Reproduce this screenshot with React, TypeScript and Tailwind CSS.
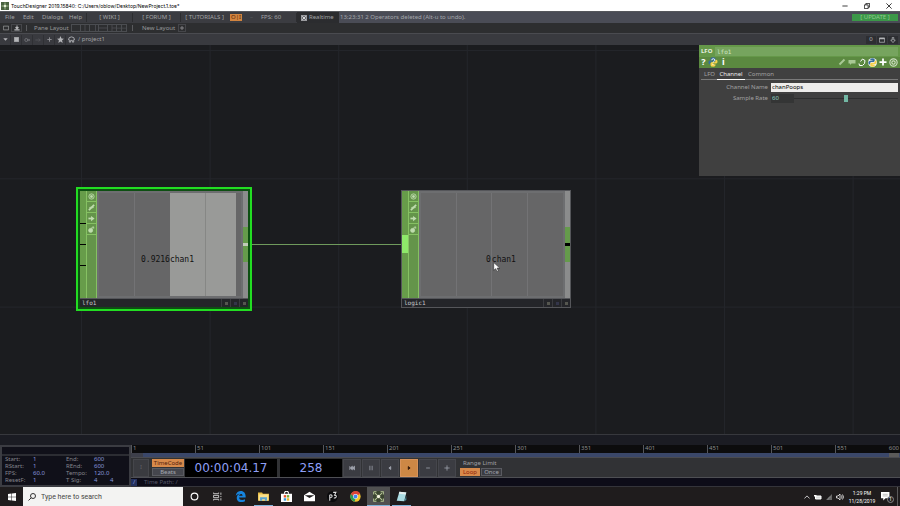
import React from 'react';
import { clsx } from 'clsx';

const TICKS = [1, 51, 101, 151, 201, 251, 301, 351, 401, 451, 501, 551];

const TIME_INFO = [
  ['Start:', '1', 'End:', '600', ''],
  ['RStart:', '1', 'REnd:', '600', ''],
  ['FPS:', '60.0', 'Tempo:', '120.0', ''],
  ['ResetF:', '1', 'T Sig:', '4', '4'],
];

function Icon({ children, className = 'size-2', box = '0 0 16 16' }: { children: React.ReactNode; className?: string; box?: string }) {
  return (
    <svg viewBox={box} className={clsx('shrink-0', className)} fill="none" stroke="currentColor" strokeWidth="2" aria-hidden="true">
      {children}
    </svg>
  );
}

function TitleBar() {
  return (
    <header className="flex h-[11px] shrink-0 items-center bg-white pl-px text-black">
      <Icon className="size-2">
        <rect width="16" height="16" fill="#4a6340" stroke="none" />
        <path d="M8 1v14M1 8h14" stroke="#9db98a" />
        <circle cx="8" cy="8" r="2.5" fill="#e4efd8" stroke="none" />
      </Icon>
      <h1 className="ml-0.5 flex-1 whitespace-nowrap font-['Inter',sans-serif] text-[5px] leading-[8px]">
        TouchDesigner 2019.15840: C:/Users/oblow/Desktop/NewProject.1.toe*
      </h1>
      <div className="flex w-[66px] justify-around">
        <button aria-label="Minimize"><Icon className="size-[6px]"><path d="M1 8h14" /></Icon></button>
        <button aria-label="Restore">
          <Icon className="size-[6px]"><path d="M1 5h10v10H1zM5 5V1h10v10h-4" /></Icon>
        </button>
        <button aria-label="Close"><Icon className="size-[6px]"><path d="M1 1l14 14M15 1L1 15" /></Icon></button>
      </div>
    </header>
  );
}

function MenuBar() {
  return (
    <nav className="flex h-3 shrink-0 items-center border-t border-[#55575c] bg-[#3b3c41] text-[#a3a4a6]">
      <button className="w-[23px] pl-[5px] text-left">File</button>
      <button className="w-[19px] text-left">Edit</button>
      <button className="w-[27px] text-left">Dialogs</button>
      <button className="w-[17px] text-left">Help</button>
      <a href="#wiki" className="w-[46px] border-l border-[#2c2d30] text-center">[ WIKI ]</a>
      <a href="#forum" className="w-[48px] border-l border-[#2c2d30] text-center">[ FORUM ]</a>
      <a href="#tutorials" className="w-[48px] border-l border-[#2c2d30] text-center">[ TUTORIALS ]</a>
      <button className="ml-0.5 h-[7px] w-[12px] bg-[#d1843f] leading-[7px] text-[#5a2508]">O|I</button>
      <span className="w-[19px] text-center text-[#5d5f63]">–</span>
      <span className="w-[36px] border-r border-[#2c2d30]">FPS: 60</span>
      <label className="flex h-full w-[42px] items-center gap-0.5 bg-[#2b2c2f] pl-1">
        <span className="grid size-[6px] place-items-center">
          <input
            type="checkbox"
            defaultChecked
            className="col-start-1 row-start-1 size-[6px] appearance-none border border-[#9a9b9f] bg-[#6a6b70]"
          />
          <Icon className="pointer-events-none col-start-1 row-start-1 size-1 text-[#d5d6d8]"><path d="M1 1l14 14M15 1L1 15" strokeWidth="4" /></Icon>
        </span>
        Realtime
      </label>
      <p className="h-full flex-1 bg-[#4a4c56] pl-px leading-[11px] text-[#a5a7ac]">
        13:23:31 2 Operators deleted (Alt-u to undo).
      </p>
      <div className="flex h-full items-center bg-[#4a4c56] pr-0.5">
        <button className="h-[7px] w-[46px] bg-[#3b9848] leading-[7px] text-[#8fca8f]">[ UPDATE ]</button>
      </div>
    </nav>
  );
}

const LAYOUTS = ['', 'M8 0v16', 'M11 0v16', 'M0 8h16', 'M8 0v16M8 8h8', 'M8 0v16M0 8h16'];

function PaneBar() {
  return (
    <div className="flex h-2.5 shrink-0 items-center bg-[#2d2e30] text-[#98999b]">
      <button aria-label="Open pane" className="flex h-2 w-[11px] items-center justify-center">
        <Icon className="size-[6px]"><path d="M1 3h14v10H1z" /></Icon>
      </button>
      <button aria-label="Save pane" className="flex h-2 w-[11px] items-center justify-center border border-[#45464a] text-[#b7b8ba]">
        <Icon className="size-[6px]"><path d="M8 1v8M4 6l4 4 4-4M1 13h14" strokeWidth="3" /></Icon>
      </button>
      <span className="ml-1 h-1.5 border-l border-[#5a5b5e]" />
      <span className="w-[44px] pl-[7px]">Pane Layout</span>
      <div className="flex border border-[#4b4d51]">
        {LAYOUTS.map((d, i) => (
          <button key={i} aria-label={`Layout ${i + 1}`} className="h-1.5 w-[9px] border-r border-[#4b4d51] last:border-r-0">
            <svg viewBox="0 0 16 16" preserveAspectRatio="none" className="size-full" stroke="#4b4d51" strokeWidth="2">
              <path d={d} />
            </svg>
          </button>
        ))}
      </div>
      <span className="ml-[5px] h-1.5 border-l border-[#5a5b5e]" />
      <span className="w-[45px] pl-[9px]">New Layout</span>
      <button aria-label="Add layout" className="flex size-2 items-center justify-center border border-[#45464a]">
        <Icon className="size-1"><path d="M8 0v16M0 8h16" strokeWidth="3" /></Icon>
      </button>
    </div>
  );
}

function PathBar() {
  const cell = 'flex h-2.5 w-[11px] items-center justify-center border-r border-[#2f3034]';
  return (
    <div className="flex h-3 shrink-0 items-center border-t border-[#4a4b50] bg-[#393a3f] text-[#b4b5b8]">
      <button aria-label="Pane type" className={cell}><Icon className="size-[5px]"><path d="M1 4h14l-7 8z" fill="currentColor" stroke="none" /></Icon></button>
      <button aria-label="Stop" className={cell}><Icon className="size-[5px]"><path d="M1 1h14v14H1z" fill="currentColor" /></Icon></button>
      <button aria-label="Back" className={clsx(cell, 'text-[#7b7c80]')}><Icon className="size-[6px]"><circle cx="6" cy="8" r="4" /><path d="M8 8h7M12 5l3 3-3 3" /></Icon></button>
      <button aria-label="Forward" className={clsx(cell, 'text-[#595a5f]')}><Icon className="size-[6px]"><path d="M1 8h13M10 4l4 4-4 4" /></Icon></button>
      <button aria-label="Add" className={clsx(cell, 'text-[#8f9094]')}><Icon className="size-[5px]"><path d="M8 1v14M1 8h14" strokeWidth="3" /></Icon></button>
      <button aria-label="Bookmarks" className={cell}><Icon className="size-[7px]"><path d="M8 0l2.3 5.6 5.7.4-4.4 3.7L13 16l-5-3.3L3 16l1.4-6.300L0 6l5.700-.4z" fill="currentColor" stroke="none" /></Icon></button>
      <button aria-label="Home" className="flex h-2.5 w-[11px] items-center justify-center"><Icon className="size-[7px]"><path d="M1 9a7 7 0 0 1 14 0M3 8v6h3v-4h4v4h3V8" /></Icon></button>
      <span className="flex-1 pl-px text-[#a1a2a5]">/ project1</span>
      <button aria-label="Count" className="flex h-2 w-2.5 items-center justify-center bg-[#2d2e32] text-[#b4b5b8]">0</button>
      <button aria-label="Maximize" className="ml-px flex h-2 w-2.5 items-center justify-center bg-[#2d2e32]"><Icon className="size-[6px]"><path d="M1 3h14v11H1z" /><path d="M1 4h14" strokeWidth="4" /></Icon></button>
      <button aria-label="Split" className="ml-px mr-0.5 flex h-2 w-2.5 items-center justify-center bg-[#2d2e32]"><Icon className="size-[6px]"><path d="M6 1h4v7h4l-6 7-6-7h4z" /></Icon></button>
    </div>
  );
}

const FLAGS = [
  <g key="view"><circle cx="8" cy="8" r="6" /><circle cx="8" cy="8" r="2.500" fill="currentColor" /></g>,
  <g key="edit"><path d="M2 14L14 2" strokeWidth="4" /><path d="M3 8l5-1M8 9l5-1" /></g>,
  <g key="export"><path d="M1 8h8" strokeWidth="4" /><path d="M7 2l8 6-8 6z" fill="currentColor" stroke="none" /></g>,
  <g key="lock"><circle cx="6" cy="10" r="4.500" fill="currentColor" /><path d="M9 7V3l4-1v4" /></g>,
];

type NodeProps = { name: string; value: string; selected?: boolean };

function ChopNode({ name, value, selected }: NodeProps) {
  return (
    <section
      className={clsx(
        'flex flex-col',
        selected
          ? 'w-[176px] border-2 border-[#22dd22] p-0.5 bg-[#0d4f12]'
          : 'w-[170px] border border-[#55565a] bg-[#55565a]',
      )}
    >
      <div className="flex h-[107px]">
        <div className="flex w-[6px] flex-col bg-[#679c4a]">
          {selected ? (
            <>
              <i className="h-[33px] border-b border-black" />
              <i className="h-[21px] border-b border-black" />
              <i className="h-[21px] border-b border-black" />
            </>
          ) : (
            <i className="mt-[44px] h-[18px] bg-[#8ee86a]" />
          )}
        </div>
        <div className="w-[11px] border-x border-[#86c163] bg-[#64944a]">
          {FLAGS.map((flag, i) => (
            <button key={i} aria-label={`${name} flag ${i + 1}`} className="flex h-[11px] w-full items-center justify-center border-b border-[#86c163] text-[#bfdcae]">
              <Icon className="size-[7px]">{flag}</Icon>
            </button>
          ))}
        </div>
        <div className="relative grid flex-1 grid-cols-4 border-2 border-[#6d6e70] bg-[#666667]">
          <i className="border-r border-[#737375]" />
          <i className={clsx(!selected && 'border-r border-[#737375]')} />
          <i className={clsx('border-r', selected ? 'border-[#868785] bg-[#999a98]' : 'border-[#737375]')} />
          <i className={clsx(selected && 'border-r-[5px] border-[#666667] bg-[#999a98]')} />
          <output
            className={clsx(
              "absolute top-[62px] whitespace-pre font-['DejaVu_Sans_Mono',monospace] text-[8px] leading-[10px] text-[#111]",
              selected ? 'left-[42px]' : 'left-[65px]',
            )}
          >
            {value}
            <span className={clsx(!selected && 'ml-px')}>chan1</span>
          </output>
        </div>
        <div className="flex w-[5px] flex-col bg-[#8b8c8c] pt-[36px]">
          <i className="h-4 bg-[#659b4b]" />
          <i className={clsx('h-[3px]', selected ? 'bg-[#c1cbb9]' : 'bg-black')} />
          <i className="h-4 bg-[#659b4b]" />
        </div>
      </div>
      <div className="flex h-[9px] items-center border-t border-[#55565a] bg-[#242529] font-['DejaVu_Sans_Mono',monospace] text-[6px] leading-[8px] text-[#c7c8c9]">
        <span className="flex-1 pl-0.5">{name}</span>
        {['Bypass', 'Color', 'Display'].map((label) => (
          <button key={label} aria-label={label} className="flex h-full w-[9px] items-center justify-center border-l border-[#3a3b3f]">
            <i className={clsx('size-[3px]', label === 'Color' ? 'bg-[#33354a]' : 'bg-[#55564f]')} />
          </button>
        ))}
      </div>
    </section>
  );
}

function PythonIcon({ round }: { round?: boolean }) {
  return (
    <svg viewBox="0 0 16 16" className={round ? 'size-[9px]' : 'size-2.5'} aria-hidden="true">
      {round && <circle cx="8" cy="8" r="8" fill="#f1f3ef" />}
      <path d="M8 0.500c-4 0-4 1.500-4 4h4v1H3c-3 0-3 6 0 6h1V9c0-1 1-2 2-2h4c1 0 2-1 2-2 0-3 0-4.500-4-4.500z" fill="#376d9f" />
      <path d="M8 15.500c4 0 4-1.500 4-4H8v-1h5c3 0 3-6 0-6h-1v2c0 1-1 2-2 2H6c-1 0-2 1-2 2 0 3 0 5 4 5z" fill="#f5d14a" />
      {!round && <path d="M6 5c0-3 5-3 5 0 0 2-3 2-3 4M8 11v2" stroke="#fff" strokeWidth="1.500" fill="none" />}
    </svg>
  );
}

function ParameterPanel() {
  return (
    <aside className="absolute right-0 top-0 h-[131px] w-[201px] bg-[#404040] text-[#a2a2a2]">
      <div className="flex h-3 items-center bg-[#659849] pl-0.5 pr-0.5">
        <label htmlFor="op-name" className="w-[14px] font-bold text-[#e7efe0]">LFO</label>
        <input id="op-name" defaultValue="lfo1" className="h-[9px] w-0 flex-1 bg-[#76a45e] px-0.5 font-['DejaVu_Sans_Mono',monospace] text-[6px] text-[#d0e4c4]" />
      </div>
      <div className="flex h-[11px] items-center gap-0.5 bg-[#5b8940] pb-px pl-0.5 pr-0.5 text-white">
        <button aria-label="Help" className="w-[5px] text-[9px] font-bold leading-[10px]">?</button>
        <button aria-label="Python help"><PythonIcon /></button>
        <button aria-label="Info" className="flex-1 pl-0.5 text-left text-[9px] font-bold leading-[10px]">i</button>
        <button aria-label="Edit" className="text-[#a8c894]"><Icon><path d="M3 13L13 3" strokeWidth="4" /></Icon></button>
        <button aria-label="Comment" className="text-[#a8c894]"><Icon><path d="M1 4h14v7H7l-3 3v-3H1z" fill="currentColor" stroke="none" /></Icon></button>
        <button aria-label="Copy"><Icon><path d="M5 7l4-5 5 3-1 6-4 4H3l-1-4" /></Icon></button>
        <button aria-label="Language"><PythonIcon round /></button>
        <button aria-label="Add"><Icon><path d="M8 1v14M1 8h14" strokeWidth="3.500" /></Icon></button>
        <button aria-label="Customize" className="text-[#cfe0c3]"><Icon className="size-[9px]"><circle cx="8" cy="8" r="6.500" /><circle cx="8" cy="8" r="3" /></Icon></button>
      </div>
      <div role="tablist" className="mx-0.5 mt-0.5 flex h-[10px] border-b border-[#7a7a7a]">
        <button role="tab" className="w-4 pl-px leading-[9px]">LFO</button>
        <button role="tab" aria-selected="true" className="h-[10px] w-[28px] border-b border-white leading-[9px] text-[#ececec]">Channel</button>
        <button role="tab" className="w-[32px] leading-[9px]">Common</button>
      </div>
      <div className="flex items-center pr-0.5 pt-[3px]">
        <label htmlFor="channel-name" className="w-[72px] pr-[3px] text-right">Channel Name</label>
        <input id="channel-name" defaultValue="chanPoops" className="h-[9px] w-0 flex-1 bg-[#eeedeb] px-px text-[6px] text-black" />
      </div>
      <div className="flex items-center pr-0.5 pt-0.5">
        <label htmlFor="sample-rate" className="w-[72px] pr-[3px] text-right">Sample Rate</label>
        <input id="sample-rate" defaultValue="60" className="h-[9px] w-[23px] bg-[#343535] px-px text-[6px] text-[#8fd0c0]" />
        <input
          type="range"
          aria-label="Sample Rate"
          defaultValue="50"
          className="h-[9px] w-0 flex-1 appearance-none bg-[linear-gradient(#2e2f2f,#2e2f2f)] bg-[length:100%_1px] bg-center bg-no-repeat [&::-webkit-slider-thumb]:h-[7px] [&::-webkit-slider-thumb]:w-1 [&::-webkit-slider-thumb]:appearance-none [&::-webkit-slider-thumb]:bg-[#73b8a4]"
        />
      </div>
    </aside>
  );
}

function Network() {
  return (
    <main className="relative flex-1 overflow-hidden bg-[#1b1c1f]">
      <svg className="absolute inset-0 size-full" aria-hidden="true">
        <defs>
          <pattern id="grid" x="81" y="5" width="128.600" height="128.300" patternUnits="userSpaceOnUse">
            <path d="M0.500 0V129M0 0.500H129" stroke="#23252a" fill="none" />
          </pattern>
        </defs>
        <rect width="100%" height="100%" fill="url(#grid)" />
        <path d="M248 199.500H402" stroke="#6f9a5c" />
      </svg>
      <div className="absolute left-[76px] top-[142px]"><ChopNode name="lfo1" value="0.9216" selected /></div>
      <div className="absolute left-[401px] top-[145px]"><ChopNode name="logic1" value="0" /></div>
      <svg viewBox="0 0 12 18" className="absolute left-[493px] top-[217px] h-[10px] w-[7px]" aria-hidden="true">
        <path d="M1 1v14l3.500-3 2.500 5 2.500-1-2.500-5H12z" fill="#fff" stroke="#222" />
      </svg>
      <ParameterPanel />
    </main>
  );
}

const TRANSPORT = [
  { label: 'Jump to start', d: 'M2 3v10M9 3v10L3 8zM15 3v10L9 8z' },
  { label: 'Pause', d: 'M5 2v12M11 2v12' },
  { label: 'Reverse', d: 'M10 4v8L5 8z' },
  { label: 'Play', d: 'M6 4v8l5-4z', active: true },
  { label: 'Step back', d: 'M3 8h10' },
  { label: 'Step forward', d: 'M1 8h14M8 1v14' },
];

function Timeline() {
  return (
    <div className="flex h-[42px] shrink-0 bg-[#0d0c18]">
      <div className="w-[131px] border-2 border-[#3b3c42] bg-[#101019]">
        <div className="h-[9px] border-b-2 border-[#2c2d33]" />
        <table className="ml-[3px] text-left text-[#84858c]">
          <tbody>
            {TIME_INFO.map(([a, b, c, d, e]) => (
              <tr key={a} className="h-[7px] leading-[7px]">
                <th className="w-[28px] p-0 font-normal">{a}</th>
                <td className="w-[33px] p-0 text-[#8797dd]">{b}</td>
                <th className="w-[28px] p-0 font-normal">{c}</th>
                <td className="w-4 p-0 text-[#8797dd]">{d}</td>
                <td className="w-2 p-0 text-[#8797dd]">{e}</td>
              </tr>
            ))}
          </tbody>
        </table>
      </div>
      <div className="flex min-w-0 flex-1 flex-col">
        <div className="flex h-[8px] bg-[#0c0c0d] pr-px text-[#8b8c8e]">
          {TICKS.map((tick) => (
            <span key={tick} className="flex-1 border-l border-[#55565a] pl-px leading-[7px]">{tick}</span>
          ))}
          <span className="w-0"><span className="float-right leading-[7px]">600</span></span>
        </div>
        <div className="flex h-[5px] border-b border-[#4a4b50] bg-[#3a4769] pr-px">
          <i className="w-3 bg-[#3d3f4a]" />
          <i className="ml-auto w-2.5 bg-[#5b5a59]" />
        </div>
        <div className="flex h-5 items-center gap-px border-b border-[#4e4f54] bg-[#313235] pl-0.5">
          <button aria-label="Cue" className="mr-0.5 h-[18px] w-4 border border-[#45464b] bg-[#3a3b40] text-[#606167]">I</button>
          <div className="flex w-[32px] flex-col gap-px">
            <button className="h-2 bg-[#d78a4b] leading-2 text-[#54200b]">TimeCode</button>
            <button className="h-2 border border-[#5a5b61] bg-[#45464d] leading-[6px] text-[#a3a7b1]">Beats</button>
          </div>
          <output className="h-[18px] w-[92px] bg-black text-center font-['DejaVu_Sans',sans-serif] text-[12px] leading-[19px] text-[#8e9ff5]">00:00:04.17</output>
          <output className="ml-0.5 h-[18px] w-[62px] bg-black text-center font-['DejaVu_Sans',sans-serif] text-[12px] leading-[19px] text-[#8e9ff5]">258</output>
          {TRANSPORT.map((item) => (
            <button
              key={item.label}
              aria-label={item.label}
              className={clsx(
                'flex h-[18px] w-[18px] items-center justify-center border',
                item.active ? 'border-[#d8935a] bg-[#cd8845] text-[#2b1305]' : 'border-[#45464c] bg-[#3b3c42] text-[#a4a8b3]',
              )}
            >
              <Icon className="size-[6px]"><path d={item.d} fill="currentColor" strokeWidth="2" /></Icon>
            </button>
          ))}
          <div className="ml-[3px] flex flex-col">
            <span className="pl-[3px] leading-[9px] text-[#a0a1a6]">Range Limit</span>
            <div className="flex gap-px">
              <button className="h-2 w-5 bg-[#d78a4b] leading-2 text-[#8f2008]">Loop</button>
              <button className="h-2 w-[21px] border border-[#5a5b61] bg-[#3b3c42] leading-[6px] text-[#a3a7b1]">Once</button>
            </div>
          </div>
        </div>
        <div className="flex h-[9px] items-center border-b border-[#34343a]">
          <button className="h-[7px] w-1.5 bg-[#24315e] leading-[7px] text-[#8797dd]">/</button>
          <span className="pl-[7px] text-[#565869]">Time Path: /</span>
        </div>
      </div>
    </div>
  );
}

const APPS = [
  { name: 'Cortana', icon: <circle cx="8" cy="8" r="6" stroke="#fff" /> },
  { name: 'Task View', icon: <path d="M1 1v2h9V1M1 15v-2h9v2M1 6h9v4H1zM14 1v4M14 7v2M14 11v4" stroke="#ddd" strokeWidth="1.500" /> },
  {
    name: 'Edge',
    icon: <path d="M1 7C2 2 5 0 8.500 0 13 0 15.500 3.500 15.500 8v1.500H6c0 4 5 4.500 8.500 2.500v3C9 17.500 2.500 16 2.500 10c0-3 2-5 4-6C3.500 4.500 2 6 1 7zm5 0h5c0-4-4.500-3.500-5 0z" fill="#1684de" stroke="none" />,
  },
  {
    name: 'File Explorer',
    open: true,
    icon: <g stroke="none"><path d="M0 2h6l1 2h9v10H0z" fill="#e8bd45" /><path d="M1 5h14v9H1z" fill="#f9e08d" /><path d="M3 9h10v5h-3v-2H6v2H3z" fill="#5aa4d2" /></g>,
  },
  {
    name: 'Store',
    icon: <g stroke="none"><path d="M5 4c0-5 6-5 6 0" stroke="#fff" strokeWidth="1.500" /><path d="M0 4h16v12H0z" fill="#fff" /><path d="M4 6h3.500v3.500H4z" fill="#e5502d" /><path d="M8.500 6H12v3.500H8.500z" fill="#75ae35" /><path d="M4 10.500h3.500V14H4z" fill="#3099dc" /><path d="M8.500 10.500H12V14H8.500z" fill="#ecb526" /></g>,
  },
  { name: 'Mail', icon: <g stroke="none"><path d="M0 6l8-5 8 5v9H0z" fill="#fff" /><path d="M1 6h14l-7 4z" fill="#1f1c1d" /></g> },
  {
    name: 'Processing',
    icon: <g><circle cx="8" cy="8" r="8" fill="#0b0b0d" stroke="none" /><path d="M4 14V6c4-2 5 4 0 4M9 2h4l-2 4c4 0 3 5-1 4" stroke="#e4e4e4" strokeWidth="1.500" /></g>,
  },
  {
    name: 'Chrome',
    icon: <g stroke="none"><circle cx="8" cy="8" r="7.500" fill="#f3c52d" /><path d="M8 8L1.500 4.300A7.500 7.500 0 0 1 14.500 4.300z" fill="#dc4437" /><path d="M8 8L1.500 4.300A7.500 7.500 0 0 0 7 15.500z" fill="#2b9c57" /><path d="M8 4.500h7A7.500 7.500 0 0 0 1.500 4.300L5 8z" fill="#dc4437" /><circle cx="8" cy="8" r="3.600" fill="#fff" /><circle cx="8" cy="8" r="2.800" fill="#4584ee" /></g>,
  },
  {
    name: 'TouchDesigner',
    open: true,
    active: true,
    icon: <g><path d="M0 0h16v16H0z" fill="#3a4530" stroke="none" /><path d="M1 1h4M1 1v4M11 1h4v4M1 11v4h4M15 11v4h-4M3 3l3 3M13 3l-3 3M3 13l3-3M13 13l-3-3" stroke="#b9c69a" strokeWidth="1.500" /><circle cx="8" cy="8" r="2.500" fill="#f3f3df" stroke="none" /></g>,
  },
  {
    name: 'Notepad',
    open: true,
    icon: <g stroke="none"><path d="M5 1l10 1-3 13-11-1z" fill="#a9dbe2" /><path d="M5 1l10 1-1 3L4 4z" fill="#e6efef" /><path d="M12 15l3-8v6z" fill="#4d91a0" /></g>,
  },
];

function Taskbar() {
  return (
    <footer className="flex h-[19px] shrink-0 items-center bg-[#1f1c1d] font-['Roboto',sans-serif] text-white">
      <button aria-label="Start" className="flex w-[23px] justify-center">
        <Icon className="size-2"><path d="M0 2l7-1v6.500H0zM8 1l8-1v7.500H8zM0 8.500h7V15l-7-1zM8 8.500h8V16l-8-1z" fill="#fff" stroke="none" /></Icon>
      </button>
      <label className="flex h-full w-[160px] items-center gap-[5px] bg-[#f3f3f2] pl-[5px] text-[#333]">
        <Icon className="size-2"><circle cx="10" cy="6" r="5" /><path d="M6.500 9.500L1 15" /></Icon>
        <input aria-label="Search" placeholder="Type here to search" className="w-[120px] bg-transparent text-[7px] leading-[10px] placeholder:text-[#444]" />
      </label>
      <div className="flex h-full flex-1">
        {APPS.map((app) => (
          <button
            key={app.name}
            aria-label={app.name}
            className={clsx('flex w-[23px] flex-col items-center', app.active && 'bg-[#505051]')}
          >
            <span className="flex flex-1 items-center"><Icon className={app.name === 'Cortana' || app.name === 'Task View' ? 'size-[9px]' : 'size-[11px]'}>{app.icon}</Icon></span>
            <i className={clsx('h-px', app.active ? 'w-full' : 'w-[19px]', app.open && 'bg-[#7fb4dc]')} />
          </button>
        ))}
      </div>
      <div className="flex items-center gap-1">
        <button aria-label="Hidden icons"><Icon className="size-[6px]"><path d="M1 12l7-7 7 7" /></Icon></button>
        <Icon className="size-2"><path d="M3 6h11v6H3z" fill="#ddd" /><path d="M0 4h5v3H0z" fill="#fff" stroke="none" /></Icon>
        <Icon className="size-[6px] text-[#88898a]"><path d="M0 16L16 0v16z" fill="#666" stroke="none" /><path d="M3 14h4v-4h4V6" /></Icon>
        <button aria-label="Volume"><Icon className="size-2"><path d="M1 6h3l4-4v12l-4-4H1zM11 5q2 3 0 6M13 3q4 5 0 10" strokeWidth="1.500" /></Icon></button>
        <div className="w-[28px] text-center text-[5px] leading-2">
          <div>1:29 PM</div>
          <div>11/28/2019</div>
        </div>
        <button aria-label="Notifications" className="relative ml-px mr-[7px]">
          <Icon className="size-[9px]"><path d="M0 0h15v11H8l-4 4v-4H0z" fill="#fff" stroke="none" /><path d="M3 4h9M3 7h9" stroke="#888" strokeWidth="1" /></Icon>
          <span className="absolute -bottom-0.5 -right-1 size-[7px] rounded-full border border-[#8a8a8a] bg-[#1f1c1d] text-[5px] leading-[5px]">1</span>
        </button>
      </div>
      <i className="mr-0.5 h-full border-l border-[#5b5a5b]" />
    </footer>
  );
}

export default function App() {
  return (
    <div className="flex h-screen flex-col overflow-hidden bg-[#1b1c1f] font-['Noto_Sans',sans-serif] text-[6px] leading-[9px] whitespace-nowrap">
      <TitleBar />
      <MenuBar />
      <PaneBar />
      <PathBar />
      <Network />
      <div className="h-[11px] shrink-0 border-t border-[#37383d] bg-[#1b1c23]" />
      <Timeline />
      <Taskbar />
    </div>
  );
}
